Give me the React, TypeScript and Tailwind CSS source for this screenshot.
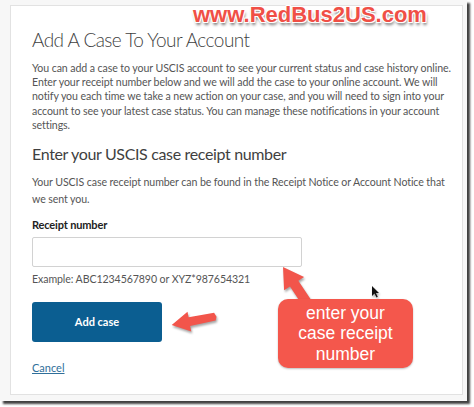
import React from 'react';

const Annotations: React.FC = () => (
  <svg
    className="absolute left-0 top-0 pointer-events-none drop-shadow-[1px_2px_1px_rgba(0,0,0,0.35)]"
    width="474"
    height="407"
    viewBox="0 0 474 407"
  >
    {/* arrow up to the input */}
    <polygon
      points="283,267 304.1,277 298.3,280.8 310.5,299.1 302.1,304.7 290,286.4 284.1,290.3"
      fill="#f2554b"
    />
    {/* arrow left to the button */}
    <polygon
      points="171.7,325 187.5,311.8 188.6,317.2 214.1,312.8 216.5,316.7 215.7,320.6 190.2,326 191.3,331.4"
      fill="#f2554b"
      strokeLinejoin="round"
    />
    {/* mouse pointer */}
    <polygon points="372,286 372,296 374.5,293.5 376.5,297.5 377.8,296.8 375.8,293 379,293" fill="#111" />
  </svg>
);

const body = 'text-[10.6px] tracking-[-0.09px] text-[#555] whitespace-nowrap';

export default function App() {
  return (
    <div className="w-[474px] h-[407px] bg-white relative overflow-hidden font-['Lato',sans-serif]">
      <div className="w-[467px] h-[401px] bg-[#f7f7f7] pl-[10px] pt-[5px] shadow-[3px_3px_2px_rgba(0,0,0,0.75)]">
        <div className="w-[453px] h-[390px] bg-white border border-[#e2e2e2] pl-[21px] pr-[10px]">
          <h1 className="mt-[22px] text-[19px] leading-[24px] tracking-[-0.55px] font-light text-[#3f3f3f]">
            Add A Case To Your Account
          </h1>
          <p className={`mt-[9px] leading-[14.2px] ${body}`}>
            You can add a case to your USCIS account to see your current status and case history online.
            <br />
            Enter your receipt number below and we will add the case to your online account. We will
            <br />
            notify you each time we take a new action on your case, and you will need to sign into your
            <br />
            account to see your latest case status. You can manage these notifications in your account
            <br />
            settings.
          </p>
          <h2 className="mt-[12px] text-[16px] leading-[20px] tracking-[-0.35px] text-[#3f3f3f]">
            Enter your USCIS case receipt number
          </h2>
          <p className={`mt-[10px] leading-[17px] ${body}`}>
            Your USCIS case receipt number can be found in the Receipt Notice or Account Notice that
            <br />
            we sent you.
          </p>
          <label className="block mt-[9px] text-[11px] leading-[16px] tracking-[-0.15px] font-bold text-[#222]">
            Receipt number
          </label>
          <input
            type="text"
            className="block mt-[4px] w-[270px] h-[30px] border border-[#d2d2d2] rounded-[2px] bg-white outline-none"
          />
          <p className={`mt-[5px] leading-[14px] ${body}`}>Example: ABC1234567890 or XYZ*987654321</p>
          <button className="mt-[16px] w-[130px] h-[40px] rounded-[3px] bg-[#0b5e91] text-white text-[11px] font-bold">
            Add case
          </button>
          <div className="mt-[12px]">
            <a href="#" className="text-[11px] leading-[14px] text-[#2f6f9a] underline">
              Cancel
            </a>
          </div>
        </div>
      </div>

      <Annotations />

      <div className="absolute left-[278px] top-[299px] w-[135px] h-[69px] rounded-[10px] bg-[#f4574c] flex flex-col items-center justify-center font-['Liberation_Sans',Arial,sans-serif] text-white text-[17.5px] leading-[20.5px] shadow-[0_1px_2px_rgba(0,0,0,0.25)]">
        <span>enter your</span>
        <span>case receipt</span>
        <span>number</span>
      </div>

      <div className="absolute left-[193px] top-[2px] font-['Liberation_Sans',Arial,sans-serif] font-bold text-[22px] leading-[26px] text-[#f04f46] [text-shadow:1px_1px_0_#fff,-1px_-1px_0_#fff,1px_-1px_0_#fff,-1px_1px_0_#fff,1px_3px_3px_rgba(0,0,0,0.55)]">
        www.RedBus2US.com
      </div>
    </div>
  );
}
